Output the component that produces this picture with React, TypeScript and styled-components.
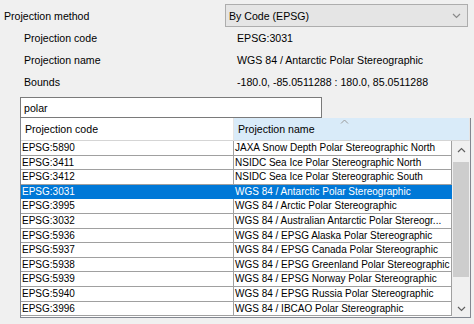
import React from "react";
import styled, { createGlobalStyle } from "styled-components";

const Global = createGlobalStyle`
  html, body { margin: 0; padding: 0; background: #f0f0f0; }
  body { font-family: Tahoma, "Liberation Sans", Arial, sans-serif; font-size: 10.6px; color: #000; }
  * { box-sizing: border-box; }
`;

const Page = styled.div`
  width: 474px;
  height: 324px;
  overflow: hidden;
  background: #f0f0f0;
  padding: 4px 6px 0 4px;
  display: flex;
  flex-direction: column;
`;

const MethodRow = styled.div`
  display: grid;
  grid-template-columns: 221px 1fr;
  align-items: center;
  height: 23px;
`;

const Label = styled.div`
  white-space: nowrap;
`;

const Combo = styled.div`
  height: 23px;
  border: 1px solid #adadad;
  background: #e5e5e5;
  display: flex;
  align-items: center;
  justify-content: space-between;
  padding: 0 6px 0 3px;
`;

const InfoList = styled.div`
  display: flex;
  flex-direction: column;
  padding-left: 20px;
`;

const InfoRow = styled.div`
  display: grid;
  grid-template-columns: 213px 1fr;
  align-items: center;
  height: 22px;
`;

const Filter = styled.div`
  margin: 4px 0 0 16px;
  width: 302px;
  height: 21px;
  background: #fff;
  border: 1px solid #7a7a7a;
  display: flex;
  align-items: center;
  padding-left: 3px;
`;

const Table = styled.div`
  margin-left: 16px;
  width: 451px;
  height: 200px;
  border: 1px solid #828790;
  border-top: none;
  background: #fff;
  display: flex;
  flex-direction: column;
  overflow: hidden;
`;

const Header = styled.div`
  display: grid;
  grid-template-columns: 213px 1fr;
  height: 23px;
  flex: none;
`;

const HeadCell = styled.div<{ $sorted?: boolean }>`
  position: relative;
  display: flex;
  align-items: center;
  padding-left: 4px;
  background: ${(p) => (p.$sorted ? "#d9ebf9" : "#fff")};
  border-right: 1px solid #e5e5e5;
  border-bottom: 1px solid #d5d5d5;
`;

const SortArrow = styled.svg`
  position: absolute;
  left: 106px;
  top: 1px;
`;

const BodyWrap = styled.div`
  flex: 1;
  display: grid;
  grid-template-columns: 1fr 18px;
  min-height: 0;
`;

const Rows = styled.div`
  overflow: hidden;
  display: flex;
  flex-direction: column;
`;

const Row = styled.div<{ $selected?: boolean }>`
  display: grid;
  grid-template-columns: 213px 1fr;
  height: 14.6px;
  flex: none;
  background: ${(p) => (p.$selected ? "#0078d7" : "#fff")};
  color: ${(p) => (p.$selected ? "#fff" : "#000")};
`;

const Cell = styled.div<{ $selected?: boolean }>`
  border-right: 1px solid ${(p) => (p.$selected ? "#0078d7" : "#a0a0a0")};
  border-bottom: 1px solid ${(p) => (p.$selected ? "#0078d7" : "#a0a0a0")};
  line-height: 13px;
  padding-left: 1px;
  white-space: nowrap;
  overflow: hidden;
  font-size: 10px;
`;

const ScrollBar = styled.div`
  background: #f0f0f0;
  display: flex;
  flex-direction: column;
  align-items: stretch;
`;

const ScrollBtn = styled.div`
  height: 17px;
  display: flex;
  align-items: center;
  justify-content: center;
`;

const Track = styled.div`
  flex: 1;
  padding: 4px 1px 0;
  display: flex;
  flex-direction: column;
`;

const Thumb = styled.div`
  height: 115px;
  background: #cdcdcd;
`;

const rows: [string, string][] = [
  ["EPSG:5890", "JAXA Snow Depth Polar Stereographic North"],
  ["EPSG:3411", "NSIDC Sea Ice Polar Stereographic North"],
  ["EPSG:3412", "NSIDC Sea Ice Polar Stereographic South"],
  ["EPSG:3031", "WGS 84 / Antarctic Polar Stereographic"],
  ["EPSG:3995", "WGS 84 / Arctic Polar Stereographic"],
  ["EPSG:3032", "WGS 84 / Australian Antarctic Polar Stereogr..."],
  ["EPSG:5936", "WGS 84 / EPSG Alaska Polar Stereographic"],
  ["EPSG:5937", "WGS 84 / EPSG Canada Polar Stereographic"],
  ["EPSG:5938", "WGS 84 / EPSG Greenland Polar Stereographic"],
  ["EPSG:5939", "WGS 84 / EPSG Norway Polar Stereographic"],
  ["EPSG:5940", "WGS 84 / EPSG Russia Polar Stereographic"],
  ["EPSG:3996", "WGS 84 / IBCAO Polar Stereographic"],
];

const Chevron = ({ up, color = "#606060" }: { up?: boolean; color?: string }) => (
  <svg width="9" height="6" viewBox="0 0 9 6">
    <path
      d={up ? "M1 5 L4.5 1.5 L8 5" : "M1 1 L4.5 4.5 L8 1"}
      fill="none"
      stroke={color}
      strokeWidth="1.2"
    />
  </svg>
);

export default function App() {
  return (
    <>
      <Global />
      <Page>
        <MethodRow>
          <Label>Projection method</Label>
          <Combo>
            <span>By Code (EPSG)</span>
            <Chevron color="#8a8a8a" />
          </Combo>
        </MethodRow>
        <InfoList>
          <InfoRow>
            <Label>Projection code</Label>
            <Label>EPSG:3031</Label>
          </InfoRow>
          <InfoRow>
            <Label>Projection name</Label>
            <Label>WGS 84 / Antarctic Polar Stereographic</Label>
          </InfoRow>
          <InfoRow>
            <Label>Bounds</Label>
            <Label>-180.0, -85.0511288 : 180.0, 85.0511288</Label>
          </InfoRow>
        </InfoList>
        <Filter>polar</Filter>
        <Table>
          <Header>
            <HeadCell>Projection code</HeadCell>
            <HeadCell $sorted>
              Projection name
              <SortArrow width="9" height="5" viewBox="0 0 9 5">
                <path d="M1 4.5 L4.5 1 L8 4.5" fill="none" stroke="#9a9a9a" strokeWidth="1" />
              </SortArrow>
            </HeadCell>
          </Header>
          <BodyWrap>
            <Rows>
              {rows.map(([code, name]) => {
                const sel = code === "EPSG:3031";
                return (
                  <Row key={code} $selected={sel}>
                    <Cell $selected={sel}>{code}</Cell>
                    <Cell $selected={sel}>{name}</Cell>
                  </Row>
                );
              })}
            </Rows>
            <ScrollBar>
              <ScrollBtn>
                <Chevron up />
              </ScrollBtn>
              <Track>
                <Thumb />
              </Track>
              <ScrollBtn>
                <Chevron />
              </ScrollBtn>
            </ScrollBar>
          </BodyWrap>
        </Table>
      </Page>
    </>
  );
}
